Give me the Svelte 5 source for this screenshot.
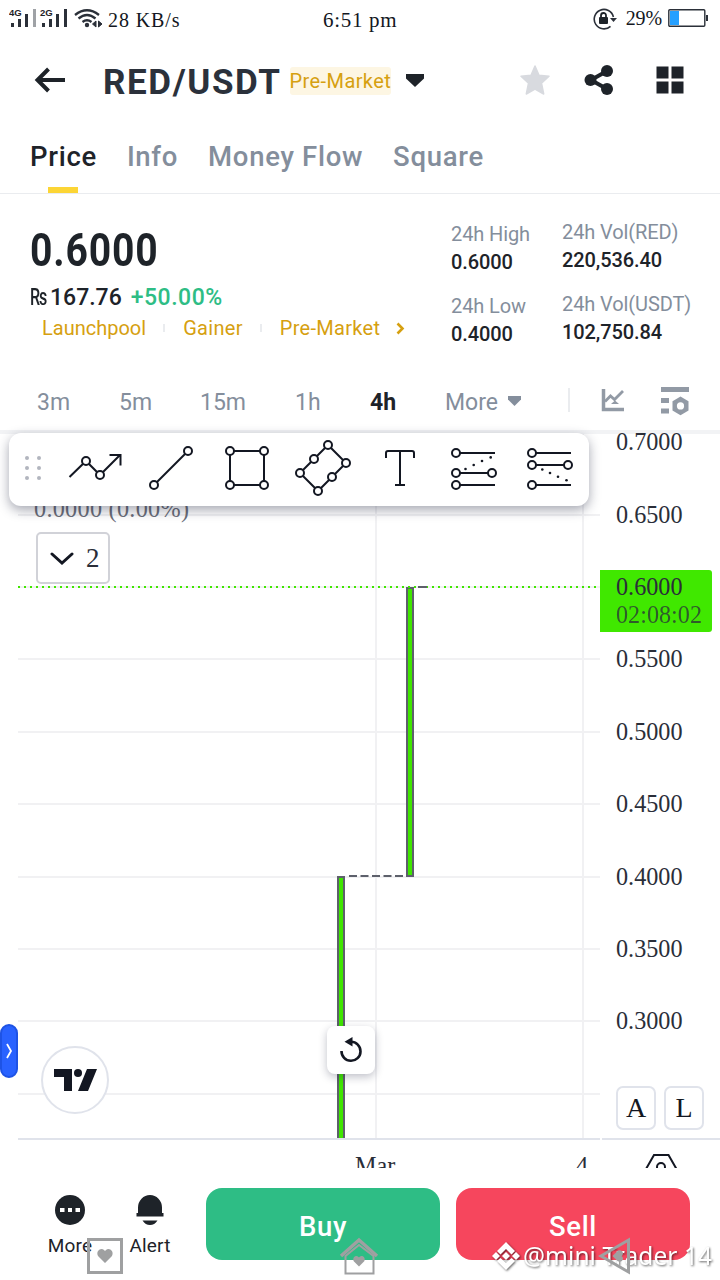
<script lang="ts">
  const tabs = ['Price', 'Info', 'Money Flow', 'Square'];
  const tags = ['Launchpool', 'Gainer', 'Pre-Market'];
  const intervals = ['3m', '5m', '15m', '1h', '4h'];
  let activeTab = 'Price';
  let activeInterval = '4h';

  const stats = [
    [
      { label: '24h High', value: '0.6000' },
      { label: '24h Low', value: '0.4000' },
    ],
    [
      { label: '24h Vol(RED)', value: '220,536.40' },
      { label: '24h Vol(USDT)', value: '102,750.84' },
    ],
  ];

  // chart scale
  const gridPrices = [0.65, 0.6, 0.55, 0.5, 0.45, 0.4, 0.35, 0.3, 0.25];
  const labelPrices = [0.7, 0.65, 0.55, 0.5, 0.45, 0.4, 0.35, 0.3];
  const gridTimes = [376, 583];
  const priceY = (price: number) => Math.round(12.3 + (0.7 - price) * 1447.5);

  // drawing tools: lines, handle positions and dotted guides
  const tools = [
    { name: 'Path', lines: 'M12.5 44 29 28 43 42 63 22M52.5 22H63.5V32.5', handles: [[29, 28], [43, 42]], dots: [] },
    { name: 'Trend line', lines: 'M21 52 55 18', handles: [[21, 52], [55, 18]], dots: [] },
    { name: 'Rectangle', lines: 'M21 18H55V52H21Z', handles: [[21, 18], [55, 18], [21, 52], [55, 52]], dots: [] },
    { name: 'Channel', lines: 'M43 12 15 40 33 58 61 30Z', handles: [[43, 12], [29, 26], [15, 40], [61, 30], [47, 44], [33, 58]], dots: [] },
    { name: 'Text', lines: 'M25 25V20Q25 18 27 18H51Q53 18 53 20V25M39 18V52M34 52H44', handles: [], dots: [] },
    { name: 'Long position', lines: 'M19 20H58M19 40H55M19 52H58', handles: [[19, 20], [19, 40], [55, 40], [19, 52]], dots: [[28.5, 36], [36.7, 32], [45, 28], [53.7, 24.4]] },
    { name: 'Short position', lines: 'M19 20H58M19 32H55M19 52H58', handles: [[19, 20], [19, 32], [55, 32], [19, 52]], dots: [[29.3, 36.5], [37, 40], [45, 43.7], [53.5, 47.3]] },
  ];
</script>

<main class="screen">
  <div class="status-bar">
    <svg class="signal" width="95" height="24" viewBox="0 0 95 24">
      <text x="0" y="9.5">4G</text>
      <text x="31" y="9.5">2G</text>
      <g fill="#2b3039">
        <path d="M2 17h3v4H2zM9 13h3v8H9zM16 8h3v13h-3zM33 17h3v4h-3zM40 13h3v8h-3zM47 8h3v13h-3zM55 3h3v18h-3z" />
        <path d="M24 3h3v18h-3z" opacity=".45" />
        <circle cx="78" cy="19" r="2.2" />
        <path d="M87 15v6l-3.5-3zM89.500 21v-6l3.5 3z" stroke="#2b3039" />
      </g>
      <path d="M66 9q12-9.500 24 0M69.500 12.500q8.500-7 17 0M73.500 16q4.500-3.500 9 0" fill="none" stroke="#2b3039" stroke-width="2.300" />
    </svg>
    <span class="speed">28 KB/s</span>
    <span class="clock">6:51 pm</span>
    <svg class="lock" width="25" height="22" viewBox="0 0 25 22">
      <path d="M17.500 18.300A9.700 9.700 0 1 1 20.400 9" fill="none" stroke="#2b3039" stroke-width="1.600" />
      <path d="M17 10h7l-3.500 4z" fill="#2b3039" />
      <rect x="6" y="9" width="9" height="7" rx="1" fill="#1e2329" />
      <path d="M8 10V7.500a2.500 2.500 0 0 1 5 0V10" fill="none" stroke="#1e2329" stroke-width="1.800" />
    </svg>
    <span class="charge">29%</span>
    <svg class="battery" width="40" height="18" viewBox="0 0 40 18">
      <rect x=".8" y=".8" width="36" height="16.400" rx="1" fill="#fff" stroke="#2b3039" stroke-width="1.400" />
      <rect x="2" y="2" width="9" height="14" fill="#26a0ff" />
      <path d="M38 6h2v6h-2z" fill="#2b3039" />
    </svg>
  </div>

  <header class="title-bar">
    <svg class="back" width="32" height="26" viewBox="0 0 32 26">
      <path d="M31 13H4M14.500 2 3.500 13l11 11" fill="none" stroke="#1e2329" stroke-width="4" />
    </svg>
    <h1>RED/USDT</h1>
    <span class="chip">Pre-Market</span>
    <svg class="caret" width="18" height="13" viewBox="0 0 18 13"><path d="M0 0h18v4.500L9 13 0 4.500z" fill="#1e2329" /></svg>
    <div class="actions">
      <svg width="32" height="32" viewBox="0 0 32 32">
        <path d="M16 2l4 9.300 10 1-7.500 6.800L24.700 30 16 25.200 7.300 30l2.200-10.900L2 12.300l10-1z" fill="#d8dadf" stroke="#d8dadf" stroke-width="1.500" stroke-linejoin="round" />
      </svg>
      <svg width="30" height="30" viewBox="0 0 30 30">
        <path d="M23 6 7 15l16 9" fill="none" stroke="#1e2329" stroke-width="4" />
        <circle cx="6.500" cy="15" r="6" /><circle cx="23" cy="6" r="6" /><circle cx="23" cy="24" r="6" />
      </svg>
      <svg width="28" height="28" viewBox="0 0 28 28">
        <path d="M.5.5h12v12H.5zM15.500.5h12v12h-12zM.5 15.500h12v12H.5zM15.500 15.500h12v12h-12z" />
      </svg>
    </div>
  </header>

  <nav class="tabs">
    {#each tabs as tab}
      <button class="tab" class:active={tab === activeTab} on:click={() => (activeTab = tab)}>{tab}</button>
    {/each}
  </nav>

  <section class="summary">
    <div class="quote">
      <div class="price">0.6000</div>
      <div class="rate"><span class="rupee">₨</span><span>167.76</span><span class="change">+50.00%</span></div>
      <div class="tags">
        {#each tags as tag}
          <span class="tag">{tag}</span>
        {/each}
        <svg width="9" height="13" viewBox="0 0 9 13"><path d="M1.500 1.500l5 5-5 5" fill="none" stroke="#d6a010" stroke-width="2.600" /></svg>
      </div>
    </div>
    {#each stats as column}
      <dl class="stats">
        {#each column as stat}
          <div>
            <dt>{stat.label}</dt>
            <dd>{stat.value}</dd>
          </div>
        {/each}
      </dl>
    {/each}
  </section>

  <div class="intervals">
    {#each intervals as interval}
      <button class:active={interval === activeInterval} on:click={() => (activeInterval = interval)}>{interval}</button>
    {/each}
    <button class="more">More <svg width="13" height="10" viewBox="0 0 13 10"><path d="M0 0h13v3.500L6.500 10 0 3.500z" fill="#848e9c" /></svg></button>
    <svg class="indicator" width="24" height="24" viewBox="0 0 24 24">
      <path d="M2.500 1v20.500H23" fill="none" stroke="#929aa5" stroke-width="3.500" />
      <path d="M4 13.500 9.500 8l4 3.500L22 3" fill="none" stroke="#929aa5" stroke-width="2.800" />
      <path d="M14 12.500l4 3.500h-8z" fill="#929aa5" />
    </svg>
    <svg class="settings" width="28" height="29" viewBox="0 0 28 29">
      <path d="M0 0h28v5H0zM0 11h8v5H0zM0 21.500h8v5H0z" fill="#929aa5" />
      <path d="M19.500 9.500l8 4.700v9.300l-8 4.700-8-4.700v-9.300z" fill="#929aa5" />
      <circle cx="19.500" cy="18.900" r="3.600" fill="#fff" />
    </svg>
  </div>

  <section class="chart">
    <svg class="plot" width="720" height="738" viewBox="0 0 720 738">
      <rect width="720" height="4" fill="#f2f3f5" />
      <g stroke="#f1f1f3" stroke-width="2">
        {#each gridPrices as price}
          <line x1="18" x2="600" y1={priceY(price)} y2={priceY(price)} />
        {/each}
        {#each gridTimes as x}
          <line x1={x} x2={x} y1="4" y2="708" />
        {/each}
      </g>
      <path d="M18 709H600M602 709H720" stroke="#e0e3eb" stroke-width="2" />
      <g fill="#40e600" stroke="#5d606b" stroke-width="2">
        <path d="M338 708V447h6v261" />
        <rect x="407" y="158" width="6" height="288" />
      </g>
      <path d="M349 446h55" stroke="#5d606b" stroke-width="2" stroke-dasharray="8 3.500" />
      <path d="M18 157H599" stroke="#40e600" stroke-width="2" stroke-dasharray="2 4" />
      <path d="M418 157h9" stroke="#5d606b" stroke-width="2" />
      {#each labelPrices as price}
        <text x="616" y={priceY(price) + 8}>{price.toFixed(4)}</text>
      {/each}
      <path d="M600 140h109q3 0 3 3v56q0 3-3 3H600z" fill="#40e800" />
      <text x="616" y="165">0.6000</text>
      <text x="616" y="193" opacity=".75">02:08:02</text>
      <text x="355" y="744">Mar</text>
      <text x="576" y="744">4</text>
      <text class="legend" x="34" y="87" textLength="155">0.0000 (0.00%)</text>
      <g fill="none" stroke="#131722" stroke-width="2">
        <path d="M646 739l8-14h14.500l8 14" />
        <circle cx="661" cy="737" r="4" />
      </g>
    </svg>

    <div class="toolbar">
      <svg width="48" height="73" viewBox="0 0 48 73" fill="#b2b5be">
        {#each [25, 35, 45] as y}
          <circle cx="18" cy={y} r="2" /><circle cx="30" cy={y} r="2" />
        {/each}
      </svg>
      {#each tools as tool}
        <svg width="76" height="73" viewBox="0 0 76 73" aria-label={tool.name} fill="none" stroke="#131722" stroke-width="2">
          <path d={tool.lines} />
          {#each tool.handles as [x, y]}
            <circle cx={x} cy={y} r="4" fill="#fff" />
          {/each}
          {#each tool.dots as [x, y]}
            <circle cx={x} cy={y} r="1.300" fill="#131722" stroke="none" />
          {/each}
        </svg>
      {/each}
    </div>

    <button class="collapse">
      <svg width="24" height="14" viewBox="0 0 24 14"><path d="M2 3l10 9 10-9" fill="none" stroke="#131722" stroke-width="3" stroke-linecap="round" /></svg>
      2
    </button>

    <div class="handle">
      <svg width="8" height="16" viewBox="0 0 8 16"><path d="M2 1l4 7-4 7" fill="none" stroke="#fff" stroke-width="1.800" /></svg>
    </div>

    <div class="brand">
      <svg width="44" height="24" viewBox="0 0 44 24" fill="#131722">
        <path d="M1 1h18v22h-8V9H1zM34 1h10l-9 22H25z" /><circle cx="25" cy="5" r="4" />
      </svg>
    </div>

    <button class="reset">
      <svg width="26" height="26" viewBox="0 0 26 26">
        <path d="M3.500 14a9.500 9.500 0 1 0 9.500-9.200H12" fill="none" stroke="#131722" stroke-width="2.600" />
        <path d="M14.500 0v9.500l-8-4.700z" fill="#131722" />
      </svg>
    </button>

    <div class="scales">
      <button>A</button>
      <button>L</button>
    </div>
  </section>

  <footer class="trade-bar">
    <div class="shortcut">
      <svg width="30" height="30" viewBox="0 0 30 30">
        <circle cx="15" cy="15" r="15" fill="#1e2329" />
        <path d="M5 13h4.500v4H5zM13 13h4v4h-4zM20.500 13H25v4h-4.500z" fill="#fff" />
      </svg>
      <span>More</span>
    </div>
    <div class="shortcut">
      <svg width="30" height="30" viewBox="0 0 30 30" fill="#1e2329">
        <path d="M3 12.500a12 12.500 0 0 1 24 0V18h1.500v3.500h-27V18H3zM7.500 25.500h15Q19.500 30 15 30t-7.500-4.500z" />
      </svg>
      <span>Alert</span>
    </div>
    <button class="order buy">Buy</button>
    <button class="order sell">Sell</button>

    <!-- floating system keys and the author's mark -->
    <svg class="overlay" width="720" height="60" viewBox="0 0 720 60">
      <defs>
        <path id="heart" d="M8 14 1 7C-1 3 2 0 4.500 0 6.500 0 8 2 8 2s1.500-2 3.500-2C14 0 17 3 15 7z" />
      </defs>
      <g class="mark">
        <path d="M506 22l9 9-3.500 3.500-5.500-5.500-5.500 5.500L497 31zM506 32l4 4-4 4-4-4zM496 32l4 4-4 4-4-4zM516 32l4 4-4 4-4-4zM497 41l3.500-3 5.500 5 5.500-5 3.500 3-9 9z" />
        <text x="523" y="45" textLength="189">@mini Trader 14</text>
      </g>
      <g fill="none" stroke="#9fa0a1">
        <rect x="88.500" y="19.500" width="33" height="33" stroke-width="3" />
        <path d="M341 36l18-16 18 16" stroke-width="3.500" />
        <path d="M345.500 36v17.500h28V36L359 25z" stroke-width="2" />
        <path d="M628.500 20v32L601 36z" stroke-width="3" />
      </g>
      <g fill="#9fa0a1">
        <use href="#heart" x="97" y="29" />
        <use href="#heart" transform="translate(353 36) scale(.75)" />
        <use href="#heart" transform="translate(623 30) rotate(90) scale(.75)" />
      </g>
    </svg>
  </footer>
</main>

<style>
  :global(body) {
    background: #fff;
  }

  .screen {
    width: 720px;
    height: 1280px;
    overflow: hidden;
    font-family: Roboto, 'Noto Sans', sans-serif;
    color: #1e2329;
    background: #fff;
  }

  svg {
    display: block;
    flex-shrink: 0;
  }

  button {
    padding: 0;
    border: none;
    background: none;
    font: inherit;
    color: inherit;
    cursor: pointer;
  }

  .status-bar {
    display: flex;
    align-items: center;
    height: 40px;
    padding: 0 12px 0 9px;
    box-sizing: border-box;
    font-family: 'Liberation Serif', serif;
    font-size: 20px;
    color: #131722;
  }

  .signal {
    margin-top: -4px;
  }

  .signal text {
    font: bold 9.5px 'Liberation Sans', sans-serif;
    fill: #1e2329;
  }

  .speed {
    width: 219px;
    margin-left: 4px;
    letter-spacing: 0.9px;
  }

  .clock {
    margin-top: 1px;
    margin-right: auto;
    margin-left: -4px;
    font-size: 21px;
    letter-spacing: 0.7px;
  }

  .lock {
    margin-top: -3px;
  }

  .charge {
    margin: -3px 6px 0 8px;
    letter-spacing: -0.1px;
  }

  .battery {
    margin-top: -4px;
  }

  .title-bar {
    display: flex;
    align-items: center;
    height: 80px;
    padding: 0 36px 0 34px;
  }

  h1 {
    margin: 5px 0 0 37px;
    font-size: 35px;
    font-weight: 700;
    line-height: 40px;
    letter-spacing: 1.6px;
    color: #2b313b;
  }

  .chip {
    margin-top: 2px;
    margin-left: 8px;
    border-radius: 3px;
    font-size: 20px;
    line-height: 28px;
    letter-spacing: 0.4px;
    color: #d6a010;
    background: #fdf6e3;
  }

  .caret {
    margin-left: 15px;
  }

  .actions {
    display: flex;
    align-items: center;
    margin-left: auto;
    fill: #1e2329;
  }

  .actions svg + svg {
    margin-left: 33px;
  }

  .actions svg:last-child {
    margin-left: 42px;
  }

  .tabs {
    display: flex;
    gap: 30px;
    height: 74px;
    padding: 21px 30px 0;
    box-sizing: border-box;
    border-bottom: 1px solid #eaecef;
  }

  .tab {
    position: relative;
    height: 52px;
    padding-bottom: 20px;
    font-size: 27.5px;
    font-weight: 500;
    line-height: 32px;
    letter-spacing: 0.7px;
    color: #848e9c;
  }

  .tab.active {
    color: #1e2329;
  }

  .tab.active::after {
    content: '';
    position: absolute;
    bottom: 0;
    left: 18px;
    width: 30px;
    height: 6px;
    background: #fcd535;
  }

  .summary {
    display: flex;
    height: 176px;
  }

  .quote {
    width: 421px;
    padding: 33px 0 0 30px;
  }

  .price {
    font-size: 46px;
    font-weight: 700;
    line-height: 46px;
    letter-spacing: 1px;
    transform: scaleX(0.85);
    transform-origin: left;
  }

  .rate {
    display: flex;
    margin-top: 11px;
    font-size: 23px;
    font-weight: 500;
    line-height: 28px;
  }

  .rupee {
    width: 20px;
    transform: scaleX(0.7);
    transform-origin: left;
  }

  .change {
    margin-left: 9px;
    letter-spacing: 0.5px;
    color: #2ebd85;
  }

  .tags {
    display: flex;
    align-items: center;
    margin: 3px 0 0 12px;
    font-size: 20px;
    line-height: 26px;
    color: #d6a010;
  }

  .tag {
    position: relative;
  }

  .tag + .tag {
    margin-left: 37px;
    letter-spacing: 0.3px;
  }

  .tag + .tag::before {
    content: '';
    position: absolute;
    top: 9px;
    left: -20px;
    width: 2px;
    height: 8px;
    background: #eaecef;
  }

  .tags svg {
    margin-left: 16px;
  }

  .stats {
    width: 111px;
    margin: 0;
    padding-top: 26px;
    font-size: 20px;
    line-height: 28px;
    white-space: nowrap;
  }

  .stats + .stats {
    padding-top: 24px;
  }

  .stats div {
    margin-bottom: 16px;
  }

  dt {
    letter-spacing: -0.1px;
    color: #848e9c;
  }

  dd {
    margin: 0;
    font-weight: 500;
    letter-spacing: -0.1px;
  }

  .intervals {
    display: grid;
    grid-template-columns: 82px 81px 95px 75px 75px 123px 33px 60px 28px;
    align-items: center;
    height: 60px;
    padding: 0 31px 0 37px;
    font-size: 23px;
    color: #848e9c;
  }

  .intervals button {
    padding-top: 5px;
    text-align: left;
  }

  .intervals .active {
    font-weight: 700;
    color: #1e2329;
  }

  .intervals .more {
    display: flex;
    align-items: center;
    gap: 10px;
  }

  .more svg {
    margin-top: -4px;
  }

  .indicator {
    grid-column: 7 / 9;
    padding-left: 31px;
    border-left: 2px solid #eaecef;
  }

  .settings {
    margin-top: 2px;
  }

  .chart {
    position: relative;
    height: 738px;
    font-family: 'Liberation Serif', serif;
  }

  .plot text {
    font-size: 24.2px;
    fill: #2a2e39;
  }

  .plot .legend {
    fill: #6a6d78;
  }

  .toolbar {
    position: absolute;
    top: 3px;
    left: 9px;
    display: flex;
    width: 580px;
    height: 73px;
    border-radius: 12px;
    background: #fff;
    box-shadow: 0 4px 12px rgba(30, 34, 60, 0.4);
  }

  .collapse {
    position: absolute;
    top: 102px;
    left: 36px;
    display: flex;
    align-items: center;
    gap: 12px;
    width: 74px;
    height: 52px;
    padding-left: 12px;
    box-sizing: border-box;
    border: 2px solid #d1d2d8;
    border-radius: 5px;
    font-size: 27px;
    color: #2a2e39;
    background: #fff;
  }

  .handle {
    position: absolute;
    top: 594px;
    left: 0;
    display: flex;
    align-items: center;
    justify-content: center;
    width: 18px;
    height: 54px;
    box-sizing: border-box;
    border: 2px solid #1e53e5;
    border-radius: 9px;
    background: #2962ff;
  }

  .brand {
    position: absolute;
    top: 616px;
    left: 41px;
    display: flex;
    align-items: center;
    justify-content: center;
    width: 68px;
    height: 68px;
    box-sizing: border-box;
    border: 2px solid #e0e3eb;
    border-radius: 50%;
    background: #fff;
  }

  .reset {
    position: absolute;
    top: 596px;
    left: 327px;
    display: flex;
    align-items: center;
    justify-content: center;
    width: 48px;
    height: 48px;
    border-radius: 8px;
    background: #fff;
    box-shadow: 0 3px 8px rgba(30, 34, 60, 0.28);
  }

  .scales {
    position: absolute;
    top: 656px;
    left: 616px;
    display: flex;
    gap: 8px;
  }

  .scales button {
    width: 40px;
    height: 44px;
    border: 2px solid #e0e3eb;
    border-radius: 7px;
    font-size: 28px;
    color: #131722;
  }

  .trade-bar {
    position: relative;
    display: grid;
    grid-template-columns: 80px 80px 250px 250px;
    height: 112px;
    padding: 20px 30px;
    box-sizing: border-box;
  }

  .shortcut {
    display: flex;
    flex-direction: column;
    align-items: center;
    padding-top: 7px;
    font-size: 19px;
    line-height: 22px;
    letter-spacing: 0.2px;
  }

  .shortcut span {
    margin-top: 10px;
  }

  .order {
    height: 72px;
    margin-left: 16px;
    padding-top: 5px;
    border-radius: 16px;
    font-size: 27.5px;
    font-weight: 500;
    letter-spacing: 0.6px;
    color: #fff;
  }

  .buy {
    background: #2ebd85;
  }

  .sell {
    background: #f6465d;
  }

  .overlay {
    position: absolute;
    bottom: 0;
    left: 0;
    pointer-events: none;
  }

  .mark {
    fill: #fff;
    filter: drop-shadow(1px 1px 1px rgba(0, 0, 0, 0.6));
  }

  .mark text {
    font: 24.5px 'Noto Sans', sans-serif;
  }
</style>
